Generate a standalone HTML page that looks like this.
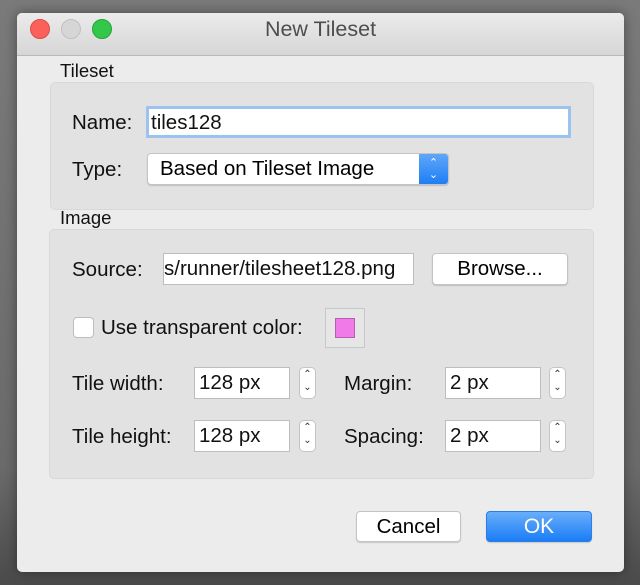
<!DOCTYPE html>
<html><head><style>
body{margin:0;width:640px;height:585px;background:linear-gradient(#7a7a7a,#6a6a6a 80%,#4a4a4a);font-family:"Liberation Sans",sans-serif;position:relative;overflow:hidden}
.win{position:absolute;left:17px;top:13px;width:607px;height:559px;background:#ececec;border-radius:5px;overflow:hidden;box-shadow:0 0 12px rgba(0,0,0,.4)}
.tb{position:absolute;left:0;top:0;width:100%;height:42px;background:linear-gradient(#ebebeb,#d6d6d6);border-bottom:1px solid #b9b9b9;text-align:center;line-height:32px;font-size:21.5px;color:#4d4d4d}
.dot{position:absolute;top:6px;width:18px;height:18px;border-radius:50%}
.a{position:absolute;font-size:20.5px;color:#111}
.box{position:absolute;background:#e2e2e2;border:1px solid #d8d8d8;border-radius:5px}
.in{position:absolute;background:#fff;border:1px solid #bdbdbd;box-sizing:border-box;font-size:20.5px;padding-left:4px;line-height:30px;color:#111;overflow:hidden;white-space:nowrap}
.btn{position:absolute;background:#fff;border:1px solid #c4c4c4;border-radius:4px;box-sizing:border-box;text-align:center;font-size:20.5px;line-height:29px;box-shadow:0 1px 1px rgba(0,0,0,.15)}
.st{position:absolute;width:17px;height:32px;background:#fff;border:1px solid #c4c4c4;border-radius:5px;box-sizing:border-box;font-size:10px;text-align:center;line-height:13px;color:#333}
</style></head><body>
<div class="win">
<div class="tb">New Tileset
<div class="dot" style="left:13px;background:#fc605b;border:1px solid #de4a45"></div>
<div class="dot" style="left:44px;background:#d6d6d6;border:1px solid #c0c0c0"></div>
<div class="dot" style="left:75px;background:#34c84a;border:1px solid #27a23a"></div>
</div>
</div>
<div class="a" style="left:60px;top:60px;font-size:18.5px">Tileset</div>
<div class="box" style="left:50px;top:82px;width:542px;height:126px"></div>
<div class="a" style="left:72px;top:111px">Name:</div>
<div class="in" style="left:146px;top:106px;width:425px;height:32px;border:3px solid #9cc2ef;line-height:28px;padding-left:2px">tiles128</div>
<div class="a" style="left:72px;top:158px">Type:</div>
<div class="btn" style="left:147px;top:153px;width:302px;height:32px;text-align:left;padding-left:12px;overflow:hidden">Based on Tileset Image<div style="position:absolute;right:0;top:0;width:29px;height:32px;background:linear-gradient(#5fa6f9,#1a7cf5);color:#fff;font-size:11px;line-height:12px;text-align:center;padding-top:3px;box-sizing:border-box">⌃<br>⌄</div></div>
<div class="a" style="left:60px;top:207px;font-size:18.5px">Image</div>
<div class="box" style="left:49px;top:229px;width:543px;height:248px"></div>
<div class="a" style="left:72px;top:258px">Source:</div>
<div class="in" style="left:163px;top:253px;width:251px;height:32px;padding-left:0">s/runner/tilesheet128.png</div>
<div class="btn" style="left:432px;top:253px;width:136px;height:32px">Browse...</div>
<div style="position:absolute;left:73px;top:317px;width:21px;height:21px;background:#fff;border:1px solid #bdbdbd;border-radius:4px;box-sizing:border-box"></div>
<div class="a" style="left:101px;top:316px">Use transparent color:</div>
<div style="position:absolute;left:325px;top:308px;width:40px;height:40px;border:1px solid #c8c8c8;background:#e6e6e6;box-sizing:border-box"><div style="margin:9px;width:20px;height:20px;background:#f07ae8;border:1px solid #b45fb5;box-sizing:border-box"></div></div>
<div class="a" style="left:72px;top:372px">Tile width:</div>
<div class="in" style="left:194px;top:367px;width:96px;height:32px">128 px</div>
<div class="st" style="left:299px;top:367px">⌃<br>⌄</div>
<div class="a" style="left:344px;top:372px">Margin:</div>
<div class="in" style="left:445px;top:367px;width:96px;height:32px">2 px</div>
<div class="st" style="left:549px;top:367px">⌃<br>⌄</div>
<div class="a" style="left:72px;top:425px">Tile height:</div>
<div class="in" style="left:194px;top:420px;width:96px;height:32px">128 px</div>
<div class="st" style="left:299px;top:420px">⌃<br>⌄</div>
<div class="a" style="left:344px;top:425px">Spacing:</div>
<div class="in" style="left:445px;top:420px;width:96px;height:32px">2 px</div>
<div class="st" style="left:549px;top:420px">⌃<br>⌄</div>
<div class="btn" style="left:356px;top:511px;width:105px;height:31px">Cancel</div>
<div class="btn" style="left:486px;top:511px;width:106px;height:31px;background:linear-gradient(#69aefa,#1a7df6);border-color:#2a7ee6;color:#fff;font-size:21px">OK</div>
</body></html>
